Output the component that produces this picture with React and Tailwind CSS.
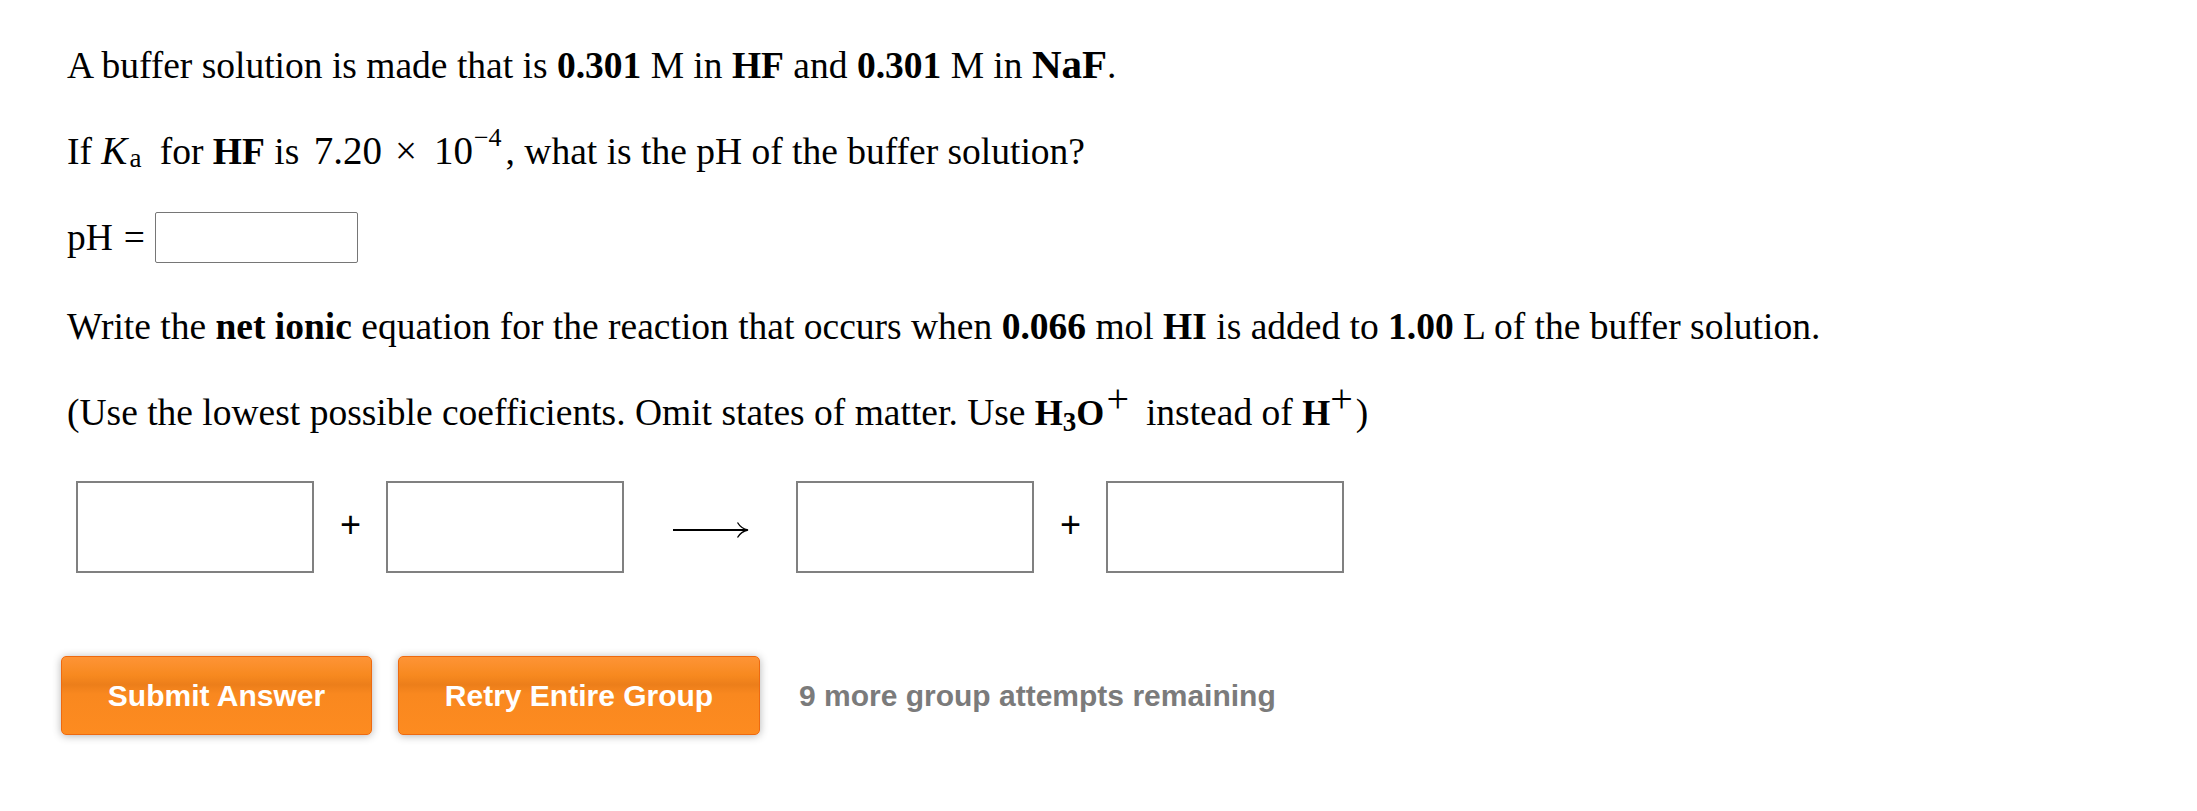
import React from "react";

function Sup({ children, className = "" }) {
  return (
    <span className={`relative leading-none ${className}`}>{children}</span>
  );
}

function AnswerBox() {
  return (
    <input
      type="text"
      className="w-[238px] h-[92px] shrink-0 border-2 border-[#808080] bg-white outline-none"
    />
  );
}

function Plus() {
  return (
    <span className="w-[21px] shrink-0 text-center font-['Liberation_Sans',Arial,sans-serif] text-[36px] leading-none -mt-[4px]">
      +
    </span>
  );
}

function Arrow() {
  return (
    <svg width="76" height="20" viewBox="0 0 76 20" className="shrink-0 mt-[6px]">
      <path d="M0 10H73" stroke="#000" strokeWidth="2" />
      <path
        d="M64.5 2.5Q68 8.5 75 10Q68 11.5 64.5 17.5"
        fill="none"
        stroke="#000"
        strokeWidth="1.3"
      />
    </svg>
  );
}

function OrangeButton({ children, width }) {
  return (
    <button
      className={`${width} h-[79px] shrink-0 rounded-[5px] border border-[#ee6a10] bg-[linear-gradient(180deg,#fe9436_0%,#f7891f_24%,#ec7e1a_36%,#f9881f_48%,#fd8b20_100%)] shadow-[0_1px_9px_rgba(0,0,0,0.3)] text-white font-bold text-[30px] font-['Liberation_Sans',Arial,sans-serif]`}
    >
      {children}
    </button>
  );
}

export default function App() {
  return (
    <div className="min-h-screen bg-white pl-[61px] pt-[44px] text-black font-['Liberation_Serif','Times_New_Roman',serif] text-[37.5px] leading-[42px]">
      {/* question text */}
      <p className="pl-[6px] whitespace-nowrap">
        A buffer solution is made that is <b>0.301</b> M in <b>HF</b> and{" "}
        <b>0.301</b> M in <b className="text-[41px] leading-none">NaF</b>.
      </p>

      <p className="pl-[6px] mt-[44px] whitespace-nowrap">
        If <i className="text-[39px] leading-none">K</i>
        <Sup className="top-[3px] text-[27px] ml-[2px] mr-[9px]">a</Sup> for <b>HF</b> is{" "}
        <span className="text-[39px] leading-none ml-[5px]">
          7.20<span className="ml-[13px] mr-[17px]">×</span>10
        </span>
        <Sup className="-top-[18px] text-[26px] ml-[1px] mr-[4px]">−4</Sup>, what is the
        pH of the buffer solution?
      </p>

      <div className="pl-[6px] mt-[39px] flex items-center">
        <span className="whitespace-nowrap">
          pH<span className="ml-[11px]">=</span>
        </span>
        <input
          type="text"
          className="ml-[10px] w-[203px] h-[51px] border border-[#767676] rounded-[2px] bg-white outline-none"
        />
      </div>

      <p className="pl-[6px] mt-[43px] whitespace-nowrap">
        Write the <b>net ionic</b> equation for the reaction that occurs when{" "}
        <b>0.066</b> mol <b>HI</b> is added to <b>1.00</b> L of the buffer solution.
      </p>

      <p className="pl-[6px] mt-[44px] whitespace-nowrap">
        (Use the lowest possible coefficients. Omit states of matter. Use{" "}
        <b className="text-[36px] leading-none">
          H<Sup className="top-[6px] text-[27px]">3</Sup>O
        </b>
        <Sup className="-top-[13px] text-[40px] ml-[2px]">+</Sup>
        <span className="ml-[17px]">instead of</span>{" "}
        <b className="text-[36px] leading-none">H</b>
        <Sup className="-top-[13px] text-[40px]">+</Sup>
        <span className="ml-[3px]">)</span>
      </p>

      {/* equation inputs */}
      <div className="pl-[15px] mt-[47px] flex items-center">
        <AnswerBox />
        <span className="ml-[26px]" />
        <Plus />
        <span className="ml-[25px]" />
        <AnswerBox />
        <span className="ml-[49px]" />
        <Arrow />
        <span className="ml-[47px]" />
        <AnswerBox />
        <span className="ml-[26px]" />
        <Plus />
        <span className="ml-[25px]" />
        <AnswerBox />
      </div>

      {/* actions */}
      <div className="mt-[83px] flex items-center">
        <OrangeButton width="w-[311px]">Submit Answer</OrangeButton>
        <div className="ml-[26px]" />
        <OrangeButton width="w-[362px]">Retry Entire Group</OrangeButton>
        <span className="ml-[39px] font-['Liberation_Sans',Arial,sans-serif] font-bold text-[30px] text-[#7b7b7b] whitespace-nowrap">
          9 more group attempts remaining
        </span>
      </div>
    </div>
  );
}
